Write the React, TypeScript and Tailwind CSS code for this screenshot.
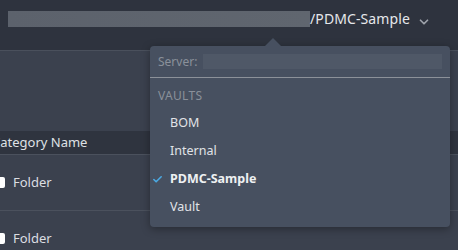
import { Check, ChevronDown } from "lucide-react";

const vaults = ["BOM", "Internal", "PDMC-Sample", "Vault"];

export default function App() {
  const selected = "PDMC-Sample";

  return (
    <div className="relative w-[458px] h-[250px] overflow-hidden bg-[#3b414e] text-[13px] font-['Noto_Sans',sans-serif]">
      {/* TOP BAR */}

      <div className="h-[51px] bg-[#2e333e] border-b border-[#4a505c] flex items-start pt-[11px] pl-[8px]">
        <div className="w-[302px] h-[16px] bg-gradient-to-r from-[#5c626c] to-[#60666f]" />
        <span className="text-[#e6e8eb] text-[14px] leading-[16px] tracking-[0.1px]">
          /PDMC-Sample
        </span>
        <ChevronDown size={14} strokeWidth={3} className="ml-[7px] mt-[4px] text-[#9da2aa]" />
      </div>

      {/* TABLE */}

      <div className="pt-[80px]">
        <div className="h-[24px] bg-[#2f343f] border-b border-[#4b515d] flex items-center -ml-[8px] text-[#dfe1e5]">
          Category Name
        </div>

        {[0, 1].map((i) => (
          <div
            key={i}
            className="h-[56px] border-b border-[#4b515d] flex items-center -ml-[6px] gap-[8px] text-[#dcdee2]"
          >
            <div className="w-[11px] h-[11px] rounded-[2px] bg-white" />
            <span>Folder</span>
          </div>
        ))}
      </div>

      {/* VAULT MENU */}

      <div className="absolute left-[150px] top-[46px] w-[300px] h-[181px] rounded-[4px] bg-[#475060] shadow-[0_2px_8px_rgba(0,0,0,0.35)]">
        <div className="absolute -top-[8px] left-[115px] w-0 h-0 border-l-[8px] border-r-[8px] border-b-[8px] border-l-transparent border-r-transparent border-b-[#475060]" />

        <div className="h-[32px] flex items-center px-[8px] border-b border-[#8c9199]">
          <span className="text-[#8a909a] text-[12px]">Server:</span>
          <div className="ml-[6px] w-[240px] h-[15px] bg-[#4f5867]" />
        </div>

        <div className="pl-[8px] pt-[9px] pb-[5px] text-[12px] text-[#8a909a] uppercase tracking-[0.3px]">
          Vaults
        </div>

        {vaults.map((v) => (
          <div key={v} className="h-[27.7px] flex items-center text-[12.5px]">
            <div className="w-[20px] flex justify-end pr-[7px]">
              {v === selected && (
                <Check size={11} strokeWidth={3.5} className="text-[#4ba9e2]" />
              )}
            </div>
            <span
              className={
                v === selected
                  ? "font-bold text-[#eef0f2]"
                  : "text-[#e1e3e7]"
              }
            >
              {v}
            </span>
          </div>
        ))}
      </div>
    </div>
  );
}
